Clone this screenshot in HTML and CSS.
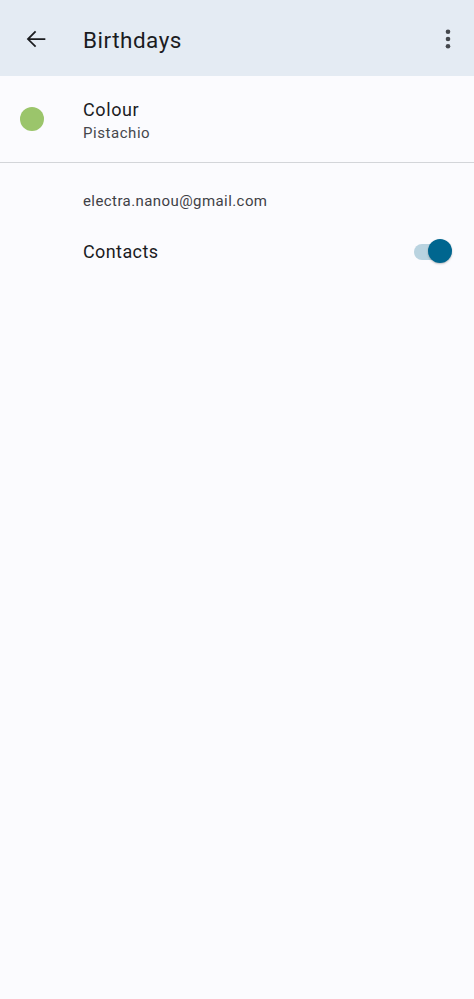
FILE: index.html
```html
<!DOCTYPE html>
<html>
<head>
<meta charset="utf-8">
<link rel="stylesheet" href="styles.css">
</head>
<body>
<div class="app">
  <header class="topbar">
    <div class="icon-btn back">
      <svg width="28" height="28" viewBox="0 0 24 24"><path d="M20 11.25H6.9l5.3-5.3-1.06-1.06L4.03 12l7.11 7.11 1.06-1.06-5.3-5.3H20z" fill="#1b1c1f"/></svg>
    </div>
    <div class="title">Birthdays</div>
    <div class="icon-btn more">
      <svg width="24" height="24" viewBox="0 0 24 24"><circle cx="12" cy="4.8" r="2.3" fill="#44474c"/><circle cx="12" cy="12" r="2.3" fill="#44474c"/><circle cx="12" cy="19.2" r="2.3" fill="#44474c"/></svg>
    </div>
  </header>
  <div class="row colour-row">
    <div class="lead"><span class="dot"></span></div>
    <div class="texts">
      <div class="primary">Colour</div>
      <div class="secondary">Pistachio</div>
    </div>
  </div>
  <div class="divider"></div>
  <div class="account">electra.nanou@gmail.com</div>
  <div class="row toggle-row">
    <div class="primary">Contacts</div>
    <div class="switch"><span class="track"></span><span class="thumb"></span></div>
  </div>
</div>
</body>
</html>
```
FILE: styles.css
```css
* { box-sizing: border-box; }
html, body { margin: 0; padding: 0; }
body {
  background: #fbfbfe;
  font-family: Roboto, "Noto Sans", sans-serif;
  color: #1b1c1f;
  width: 474px;
  height: 999px;
}
.topbar {
  height: 76px;
  background: #e4ebf3;
  display: flex;
  align-items: center;
  padding-top: 2px;
}
.icon-btn { display: flex; align-items: center; justify-content: center; }
.back { width: 28px; height: 28px; margin-left: 22px; }
.title { font-size: 22.5px; margin-left: 33px; flex: 1; letter-spacing: 0.5px; padding-top: 2px; }
.more { width: 24px; height: 24px; margin-right: 14px; }
.row { display: flex; align-items: center; }
.colour-row { height: 86px; padding-top: 4px; }
.lead { width: 83px; display: flex; padding-left: 20px; }
.dot { width: 24px; height: 24px; border-radius: 50%; background: #9bc56b; margin-top: -4px; }
.texts { display: flex; flex-direction: column; }
.primary { font-size: 18px; line-height: 24px; color: #1b1c1f; letter-spacing: 0.6px; }
.toggle-row .primary { letter-spacing: 0.4px; }
.secondary { font-size: 15px; line-height: 22px; color: #45474c; letter-spacing: 0.55px; }
.divider { height: 1px; background: #d3d5d9; }
.account { font-size: 15px; color: #3f4146; padding-left: 83px; margin-top: 28px; line-height: 20px; letter-spacing: 0.42px; }
.toggle-row { height: 62px; padding-left: 83px; padding-right: 22px; justify-content: space-between; margin-top: 10px; }
.switch { position: relative; width: 38px; height: 26px; }
.track { position: absolute; left: 0; top: 5px; width: 34px; height: 16px; border-radius: 8px; background: #b9d3e0; }
.thumb { position: absolute; right: 0; top: 0; width: 24px; height: 24px; border-radius: 50%; background: #00668f; box-shadow: 0 1px 2px rgba(0,0,0,0.25); }
```
